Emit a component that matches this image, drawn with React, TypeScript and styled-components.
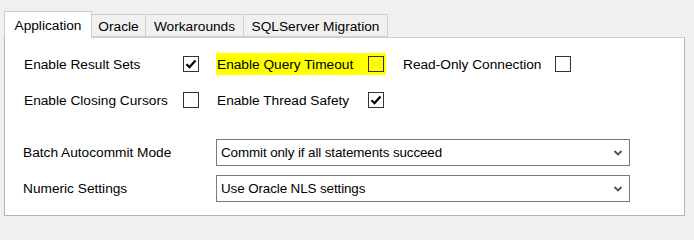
import React from 'react';
import styled, {createGlobalStyle} from 'styled-components';

const GlobalStyle = createGlobalStyle`
  html, body {
    margin: 0;
    padding: 0;
    background: #f0f0f0;
  }
  body {
    font-family: 'Liberation Sans', Arial, sans-serif;
    font-size: 13.7px;
    color: #000;
  }
`;

const Window = styled.div`
  width: 694px;
  height: 230px;
  padding: 11px 0 0 4px;
  box-sizing: border-box;
  background: #f0f0f0;
`;

const TabStrip = styled.div`
  display: flex;
  align-items: flex-end;
  height: 26px;
  position: relative;
  z-index: 1;
`;

const Tab = styled.div<{$width: number; $active?: boolean}>`
  width: ${(p) => p.$width}px;
  height: ${(p) => (p.$active ? 27 : 23)}px;
  margin-bottom: ${(p) => (p.$active ? -1 : 0)}px;
  box-sizing: border-box;
  display: flex;
  align-items: center;
  justify-content: center;
  padding-top: ${(p) => (p.$active ? 0 : 1)}px;
  background: ${(p) => (p.$active ? '#fff' : '#f0f0f0')};
  border: 1px solid #cfcfcf;
  border-bottom: ${(p) => (p.$active ? 'none' : '1px solid #cfcfcf')};
  border-left: ${(p) => (p.$active ? '1px solid #cfcfcf' : 'none')};
  white-space: nowrap;
`;

const Panel = styled.div`
  width: 681px;
  height: 179px;
  box-sizing: border-box;
  background: #fff;
  border: 1px solid #b4b4b4;
  border-top-color: #cfcfcf;
  padding: 15px 0 0 18px;
  display: flex;
  flex-direction: column;
`;

const CheckRow = styled.div`
  display: flex;
  align-items: center;
  height: 22px;
  & + & {
    margin-top: 14px;
  }
`;

const CheckField = styled.label<{$highlight?: boolean; $gap?: number}>`
  display: flex;
  align-items: center;
  height: 22px;
  padding: 0 2px 0 1px;
  margin-left: ${(p) => p.$gap ?? 0}px;
  background: ${(p) => (p.$highlight ? '#ffff00' : 'transparent')};
`;

const CheckLabel = styled.span<{$width: number}>`
  width: ${(p) => p.$width}px;
  white-space: nowrap;
`;

const Box = styled.span`
  width: 16px;
  height: 16px;
  box-sizing: border-box;
  border: 1px solid #333;
  display: flex;
  align-items: center;
  justify-content: center;
`;

const SelectSection = styled.div`
  margin-top: 28px;
  display: flex;
  flex-direction: column;
  gap: 9px;
`;

const SelectRow = styled.div`
  display: flex;
  align-items: center;
`;

const SelectLabel = styled.span`
  width: 193px;
  white-space: nowrap;
`;

const Combo = styled.div`
  width: 414px;
  height: 27px;
  box-sizing: border-box;
  border: 1px solid #7a7a7a;
  background: #fff;
  display: flex;
  align-items: center;
  justify-content: space-between;
  padding: 0 6px 0 4px;
  font-size: 13.4px;
  letter-spacing: -0.1px;
`;

const Check = () => (
  <svg width="12" height="12" viewBox="0 0 12 12">
    <path d="M1.5 6.2 L4.5 9.2 L10.5 2.5" fill="none" stroke="#000" strokeWidth="2.3" />
  </svg>
);

const Chevron = () => (
  <svg width="10" height="8" viewBox="0 0 10 8">
    <path d="M1.5 2 L5 5.5 L8.5 2" fill="none" stroke="#505050" strokeWidth="1.8" />
  </svg>
);

interface CheckOptionProps {
  label: string;
  labelWidth: number;
  checked?: boolean;
  highlight?: boolean;
  gap?: number;
}

const CheckOption = ({label, labelWidth, checked, highlight, gap}: CheckOptionProps) => (
  <CheckField $highlight={highlight} $gap={gap}>
    <CheckLabel $width={labelWidth}>{label}</CheckLabel>
    <Box>{checked && <Check />}</Box>
  </CheckField>
);

const tabs = [
  {label: 'Application', width: 88, active: true},
  {label: 'Oracle', width: 54},
  {label: 'Workarounds', width: 98},
  {label: 'SQLServer Migration', width: 144},
];

const App = (): JSX.Element => (
  <>
    <GlobalStyle />
    <Window>
      <TabStrip>
        {tabs.map((t) => (
          <Tab key={t.label} $width={t.width} $active={t.active}>
            {t.label}
          </Tab>
        ))}
      </TabStrip>
      <Panel>
        <CheckRow>
          <CheckOption label="Enable Result Sets" labelWidth={159} checked />
          <CheckOption label="Enable Query Timeout" labelWidth={151} highlight gap={15} />
          <CheckOption label="Read-Only Connection" labelWidth={152} gap={16} />
        </CheckRow>
        <CheckRow>
          <CheckOption label="Enable Closing Cursors" labelWidth={159} />
          <CheckOption label="Enable Thread Safety" labelWidth={151} checked gap={15} />
        </CheckRow>
        <SelectSection>
          <SelectRow>
            <SelectLabel>Batch Autocommit Mode</SelectLabel>
            <Combo>
              <span>Commit only if all statements succeed</span>
              <Chevron />
            </Combo>
          </SelectRow>
          <SelectRow>
            <SelectLabel>Numeric Settings</SelectLabel>
            <Combo>
              <span>Use Oracle NLS settings</span>
              <Chevron />
            </Combo>
          </SelectRow>
        </SelectSection>
      </Panel>
    </Window>
  </>
);

export default App;
